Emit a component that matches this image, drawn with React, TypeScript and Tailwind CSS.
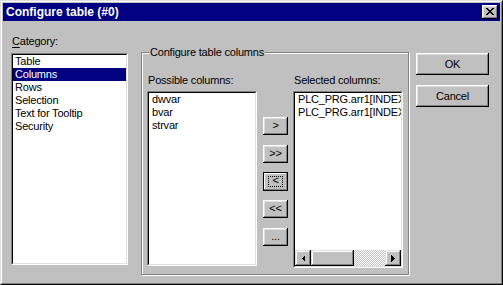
import React from "react";

const raised =
  "bg-[#c0c0c0] shadow-[inset_-1px_-1px_#000,inset_1px_1px_#fff,inset_-2px_-2px_#808080,inset_2px_2px_#dfdfdf]";

function Sunken({ className, children }: { className: string; children?: React.ReactNode }) {
  return (
    <div className={`border border-t-[#808080] border-l-[#808080] border-b-white border-r-white ${className}`}>
      <div className="w-full h-full border border-t-black border-l-black border-b-[#dfdfdf] border-r-[#dfdfdf] bg-white flex flex-col overflow-hidden">
        {children}
      </div>
    </div>
  );
}

function SmallButton({ label, focused }: { label: string; focused?: boolean }) {
  if (focused) {
    return (
      <div className="relative w-[25px] h-[19px] border border-black bg-[#c0c0c0] shadow-[inset_-1px_-1px_#808080,inset_1px_1px_#fff] flex items-center justify-center leading-[13px]">
        <span className="relative top-[-1px]">{label}</span>
        <div className="absolute left-[4px] right-[4px] top-[3px] bottom-[3px] border border-dotted border-black" />
      </div>
    );
  }
  return (
    <div className={`w-[25px] h-[18px] ${raised} flex items-center justify-center leading-[13px]`}>
      <span className="relative top-[-1px]">{label}</span>
    </div>
  );
}

function Arrow({ dir }: { dir: "left" | "right" }) {
  return (
    <div className="w-[16px] h-[16px] shrink-0 bg-[#c0c0c0] shadow-[inset_-1px_-1px_#000,inset_1px_1px_#dfdfdf,inset_-2px_-2px_#808080,inset_2px_2px_#fff] flex items-center justify-center">
      <svg width="4" height="7" viewBox="0 0 4 7" shapeRendering="crispEdges">
        {dir === "left" ? (
          <polygon points="4,0 4,7 0.5,3.5" fill="#000" />
        ) : (
          <polygon points="0,0 0,7 3.5,3.5" fill="#000" />
        )}
      </svg>
    </div>
  );
}

export default function App() {
  const categories = ["Table", "Columns", "Rows", "Selection", "Text for Tooltip", "Security"];
  const possible = ["dwvar", "bvar", "strvar"];
  const selected = ["PLC_PRG.arr1[INDEX].dwvar", "PLC_PRG.arr1[INDEX].bvar"];

  return (
    <div
      className="w-[503px] h-[285px] border border-t-[#dfdfdf] border-l-[#dfdfdf] border-b-black border-r-black bg-[#c0c0c0] text-black text-[11px] leading-[13px] tracking-[-0.2px] select-none"
      style={{ fontFamily: '"Liberation Sans", Arial, sans-serif' }}
    >
      <div className="w-full h-full border border-t-white border-l-white border-b-[#808080] border-r-[#808080] p-px flex flex-col">
        {/* Title bar */}
        <div className="h-[18px] bg-[#000080] flex items-center justify-between pl-[3px] pr-[2px] shrink-0">
          <span className="text-white font-bold text-[12px] leading-[14px] tracking-normal">Configure table (#0)</span>
          <div className={`w-[16px] h-[14px] ${raised} flex items-center justify-center`}>
            <svg width="8" height="7" viewBox="0 0 8 7" shapeRendering="crispEdges" className="relative top-[-1px]">
              <rect x="0" y="0" width="2" height="1" fill="#000" />
              <rect x="6" y="0" width="2" height="1" fill="#000" />
              <rect x="1" y="1" width="2" height="1" fill="#000" />
              <rect x="5" y="1" width="2" height="1" fill="#000" />
              <rect x="2" y="2" width="4" height="1" fill="#000" />
              <rect x="3" y="3" width="2" height="1" fill="#000" />
              <rect x="2" y="4" width="4" height="1" fill="#000" />
              <rect x="1" y="5" width="2" height="1" fill="#000" />
              <rect x="5" y="5" width="2" height="1" fill="#000" />
              <rect x="0" y="6" width="2" height="1" fill="#000" />
              <rect x="6" y="6" width="2" height="1" fill="#000" />
            </svg>
          </div>
        </div>

        {/* Body */}
        <div className="flex flex-row items-start flex-1">
          {/* Category */}
          <div className="ml-[8px] mt-[14px] w-[117px] flex flex-col">
            <div className="h-[13px] pl-px">
              <span className="underline underline-offset-[2px]">C</span>ategory:
            </div>
            <Sunken className="mt-[5px] h-[212px]">
              {categories.map((c) => (
                <div
                  key={c}
                  className={`h-[13px] pl-[2px] whitespace-nowrap ${c === "Columns" ? "bg-[#000080] text-white" : ""}`}
                >
                  {c}
                </div>
              ))}
            </Sunken>
          </div>

          {/* Group box */}
          <div className="relative ml-[13px] mt-[31px] w-[268px] h-[223px] border border-[#808080] shadow-[inset_1px_1px_0_#fff,1px_1px_0_#fff] flex flex-row items-start">
            <div className="absolute left-[7px] top-[-7px] px-px bg-[#c0c0c0] h-[13px] whitespace-nowrap">
              Configure table columns
            </div>

            <div className="ml-[5px] mt-[21px] w-[110px] flex flex-col">
              <div className="h-[13px] pl-px whitespace-nowrap">Possible columns:</div>
              <Sunken className="mt-[4px] h-[175px]">
                {possible.map((p) => (
                  <div key={p} className="h-[13px] pl-[3px] whitespace-nowrap">
                    {p}
                  </div>
                ))}
              </Sunken>
            </div>

            <div className="ml-[6px] mt-[64px] w-[25px] flex flex-col">
              <SmallButton label=">" />
              <div className="mt-[10px]">
                <SmallButton label=">>" />
              </div>
              <div className="mt-[9px]">
                <SmallButton label="<" focused />
              </div>
              <div className="mt-[9px]">
                <SmallButton label="<<" />
              </div>
              <div className="mt-[10px]">
                <SmallButton label="..." />
              </div>
            </div>

            <div className="ml-[5px] mt-[21px] w-[110px] flex flex-col">
              <div className="h-[13px] pl-px whitespace-nowrap">Selected columns:</div>
              <Sunken className="mt-[4px] h-[177px]">
                <div className="flex-1 overflow-hidden">
                  {selected.map((s) => (
                    <div key={s} className="h-[13px] pl-[3px] whitespace-nowrap">
                      {s}
                    </div>
                  ))}
                </div>
                <div className="h-[16px] flex flex-row shrink-0">
                  <Arrow dir="left" />
                  <div className="w-[43px] h-[16px] shrink-0 bg-[#c0c0c0] shadow-[inset_-1px_-1px_#000,inset_1px_1px_#dfdfdf,inset_-2px_-2px_#808080,inset_2px_2px_#fff]" />
                  <div className="flex-1 h-[16px] bg-[repeating-conic-gradient(#c0c0c0_0_25%,#ffffff_0_50%)] bg-[length:2px_2px]" />
                  <Arrow dir="right" />
                </div>
              </Sunken>
            </div>
          </div>

          {/* OK / Cancel */}
          <div className="ml-[7px] mt-[32px] w-[73px] flex flex-col">
            <div className={`h-[22px] ${raised} flex items-center justify-center`}>OK</div>
            <div className={`mt-[10px] h-[22px] ${raised} flex items-center justify-center`}>Cancel</div>
          </div>
        </div>
      </div>
    </div>
  );
}
